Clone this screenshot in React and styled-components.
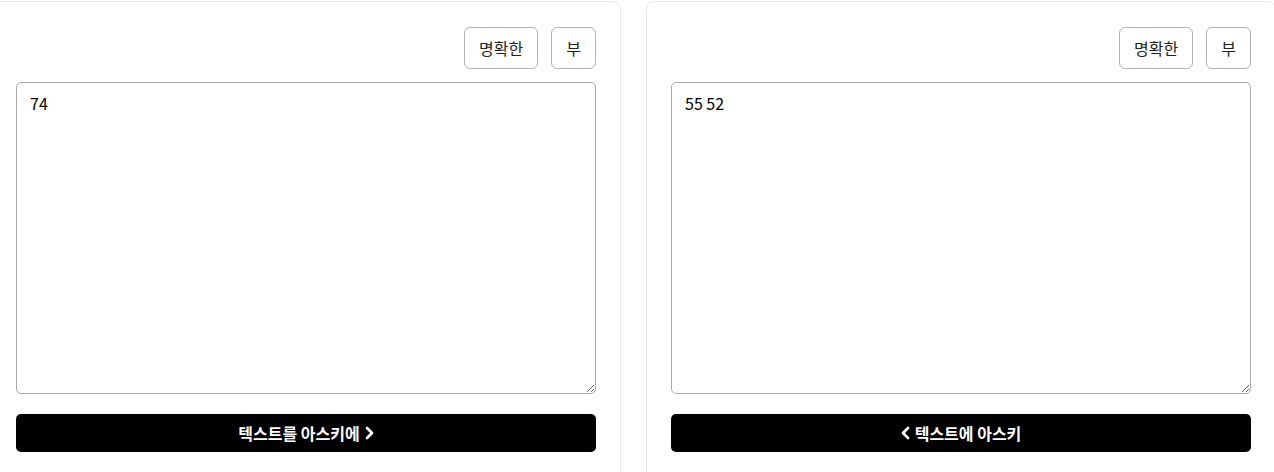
import React from "react";
import styled, { createGlobalStyle } from "styled-components";

const Global = createGlobalStyle`
  html, body { margin: 0; padding: 0; background: #fff; overflow: hidden; }
  body { font-family: "Noto Sans CJK KR", "Noto Sans", sans-serif; color: #000; }
`;

const Row = styled.div`
  display: grid;
  grid-template-columns: 630px 630px;
  column-gap: 25px;
  margin-left: -9px;
  padding-top: 1px;
`;

const Card = styled.section`
  border: 1px solid #e8e8e8;
  border-radius: 8px;
  padding: 25px 24px 30px 24px;
  display: flex;
  flex-direction: column;
  height: 500px;
  box-sizing: border-box;
`;

const Toolbar = styled.div`
  display: flex;
  justify-content: flex-end;
  gap: 13px;
  margin-bottom: 13px;
`;

const GhostButton = styled.button`
  font-family: "Noto Sans CJK KR", "Noto Sans", sans-serif;
  font-size: 16px;
  height: 42px;
  padding: 0 14px;
  background: #fff;
  color: #222;
  border: 1px solid #b3b3b3;
  border-radius: 6px;
  cursor: pointer;
`;

const TextBox = styled.textarea`
  font-family: "Noto Sans CJK KR", "Noto Sans", sans-serif;
  font-size: 16px;
  line-height: 24px;
  color: #000;
  height: 312px;
  box-sizing: border-box;
  padding: 8px 13px;
  border: 1px solid #aaa;
  border-radius: 5px;
  outline: none;
  resize: vertical;
  margin: 0;
`;

const ConvertButton = styled.button`
  margin-top: 20px;
  height: 38px;
  background: #000;
  color: #fff;
  border: none;
  border-radius: 5px;
  font-family: "Noto Sans CJK KR", "Noto Sans", sans-serif;
  font-size: 16px;
  font-weight: 700;
  display: flex;
  align-items: center;
  justify-content: center;
  gap: 5px;
  cursor: pointer;
`;

const Chevron = ({ dir }) => (
  <svg width="9" height="14" viewBox="0 0 9 14" aria-hidden="true">
    <polyline
      points={dir === "right" ? "2,2 7,7 2,12" : "7,2 2,7 7,12"}
      fill="none"
      stroke="#fff"
      strokeWidth="2.8"
      strokeLinecap="round"
      strokeLinejoin="round"
    />
  </svg>
);

function Panel({ value, label, dir }) {
  return (
    <Card>
      <Toolbar>
        <GhostButton>명확한</GhostButton>
        <GhostButton>부</GhostButton>
      </Toolbar>
      <TextBox defaultValue={value} />
      <ConvertButton>
        {dir === "left" && <Chevron dir="left" />}
        <span>{label}</span>
        {dir === "right" && <Chevron dir="right" />}
      </ConvertButton>
    </Card>
  );
}

export default function App() {
  return (
    <>
      <Global />
      <Row>
        <Panel value="74" label="텍스트를 아스키에" dir="right" />
        <Panel value="55 52" label="텍스트에 아스키" dir="left" />
      </Row>
    </>
  );
}
